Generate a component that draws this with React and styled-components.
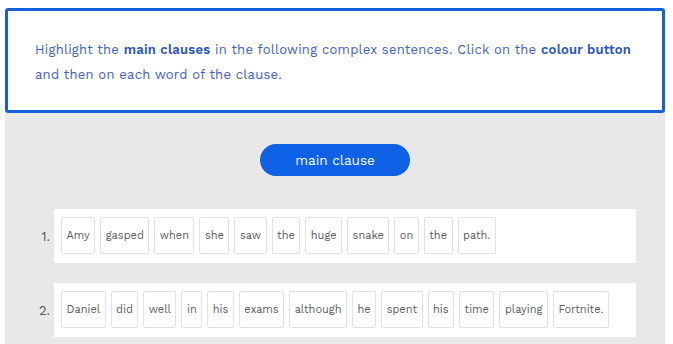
import styled, { createGlobalStyle } from 'styled-components';

const GlobalStyle = createGlobalStyle`
    html, body {
        margin: 0;
        padding: 0;
        background: #ffffff;
    }
    body {
        font-family: 'Work Sans', 'Open Sans', 'Liberation Sans', sans-serif;
    }
`;

const sentences = [
    ['Amy', 'gasped', 'when', 'she', 'saw', 'the', 'huge', 'snake', 'on', 'the', 'path.'],
    ['Daniel', 'did', 'well', 'in', 'his', 'exams', 'although', 'he', 'spent', 'his', 'time', 'playing', 'Fortnite.'],
];

export default function App() {
    return (
        <>
            <GlobalStyle />
            <PageDiv>
                <InstructionBox>
                    <InstructionP>
                        Highlight the <b>main clauses</b> in the following complex sentences. Click on the{' '}
                        <b>colour button</b> and then on each word of the clause.
                    </InstructionP>
                </InstructionBox>
                <ExercisePanel>
                    <ButtonRow>
                        <ColourButton type="button">main clause</ColourButton>
                    </ButtonRow>
                    {sentences.map((words, i) => (
                        <SentenceRow key={i}>
                            <NumberSpan>{i + 1}.</NumberSpan>
                            <WordsCard>
                                {words.map((w, j) => (
                                    <WordChip key={j}>{w}</WordChip>
                                ))}
                            </WordsCard>
                        </SentenceRow>
                    ))}
                </ExercisePanel>
            </PageDiv>
        </>
    );
}

// styled-components
const PageDiv = styled.div`
    padding: 8px 8px 0 5px;
    height: 344px;
    box-sizing: border-box;
    overflow: hidden;
`;

const InstructionBox = styled.div`
    border: 3px solid #1660dc;
    border-radius: 3px;
    height: 105px;
    box-sizing: border-box;
    padding: 26px 25px 0 27px;
    background: #ffffff;
`;

const InstructionP = styled.p`
    margin: 0;
    font-size: 13px;
    line-height: 25px;
    color: #3d62c8;
    letter-spacing: 0.24px;

    b {
        font-weight: 600;
        color: #2c55bd;
    }
`;

const ExercisePanel = styled.div`
    background: #e8e8e8;
    padding: 31px 29px 20px 0;
    min-height: 240px;
`;

const ButtonRow = styled.div`
    display: flex;
    justify-content: center;
    padding-left: 29px;
    margin-bottom: 33px;
`;

const ColourButton = styled.button`
    width: 150px;
    height: 32px;
    border: none;
    border-radius: 16px;
    background: #0f62e6;
    color: #ffffff;
    font-family: 'Work Sans', 'Open Sans', 'Liberation Sans', sans-serif;
    font-size: 13.5px;
    cursor: pointer;
`;

const SentenceRow = styled.div`
    display: flex;
    align-items: center;
    margin-bottom: 20px;
`;

const NumberSpan = styled.span`
    flex: 0 0 49px;
    text-align: right;
    box-sizing: border-box;
    padding-right: 4px;
    font-size: 13px;
    color: #555555;
`;

const WordsCard = styled.div`
    flex: 1;
    display: flex;
    gap: 5px;
    background: #ffffff;
    padding: 8px 7px 9px 7px;
`;

const WordChip = styled.span`
    height: 37px;
    box-sizing: border-box;
    display: flex;
    align-items: center;
    padding: 0 4.5px;
    border: 1px solid #e2e2e2;
    border-radius: 2px;
    font-size: 11px;
    color: #5c5c5c;
    background: #ffffff;
    cursor: pointer;
`;
